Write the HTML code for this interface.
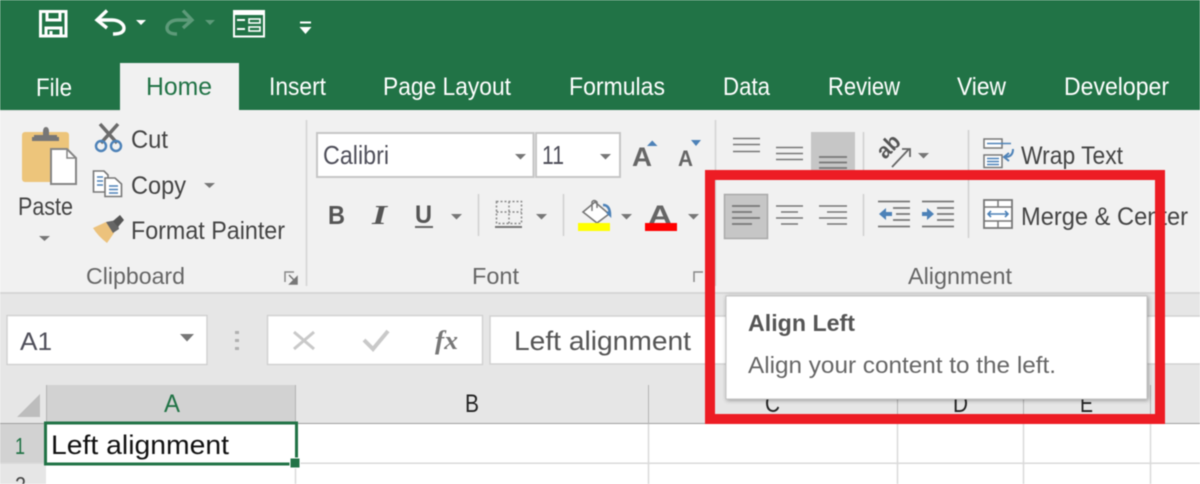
<!DOCTYPE html>
<html><head><meta charset="utf-8"><style>
html,body{margin:0;padding:0;background:#fff}
svg{display:block;filter:blur(.45px)}
text{font-family:"Liberation Sans",sans-serif;fill:#444}
</style></head><body>
<svg xmlns="http://www.w3.org/2000/svg" width="1200" height="484" viewBox="0 0 1200 484" style="width:1200px;height:484px">
<defs>
<filter id="sh" x="-5%" y="-5%" width="110%" height="110%"><feDropShadow dx="1" dy="1" stdDeviation="2" flood-color="#000" flood-opacity=".35"/></filter>
</defs>
<!-- title bar -->
<rect width="1200" height="110" fill="#217346"/>
<rect x="120" y="63" width="119" height="48" fill="#f1f1f1"/>
<!-- save -->
<path d="M40.500 11.500H66V36H40.500Z M47 11.500V20H60V11.500 M46 36V28H61V36 M51 31V36" fill="none" stroke="#fff" stroke-width="3"/>
<!-- undo -->
<path d="M98 20L112 20C120 20 124 25 124 28C124 32 120 34 113 34" fill="none" stroke="#fff" stroke-width="3.400"/>
<path d="M107 10.500L97 20L107 28" fill="none" stroke="#fff" stroke-width="3.400"/>
<path d="M136 20h10l-5 5z" fill="#fff"/>
<!-- redo -->
<path d="M192 20L178 20C170 20 167 25 167 28C167 32 171 34 177 34" fill="none" stroke="#5d9a79" stroke-width="3.400"/>
<path d="M183 10.500L192 20L183 28" fill="none" stroke="#5d9a79" stroke-width="3.400"/>
<path d="M205 20h10l-5 5z" fill="#5d9a79"/>
<!-- form -->
<rect x="234" y="11" width="30" height="25.500" fill="none" stroke="#fff" stroke-width="2"/>
<rect x="233" y="10" width="32" height="5" fill="#fff"/>
<path d="M237 20h8M237 29h8" stroke="#fff" stroke-width="2"/>
<rect x="249" y="19" width="11" height="4" fill="none" stroke="#fff" stroke-width="1.600"/>
<rect x="249" y="27" width="11" height="4" fill="none" stroke="#fff" stroke-width="1.600"/>
<!-- customize -->
<rect x="300" y="21.500" width="11" height="2" fill="#fff"/>
<path d="M299.500 27h12l-6 7z" fill="#fff"/>
<!-- tabs -->
<g font-size="25">
<text x="36" y="96" textLength="36" lengthAdjust="spacingAndGlyphs" style="fill:#fff">File</text>
<text x="146" y="95" textLength="66" lengthAdjust="spacingAndGlyphs" style="fill:#217346">Home</text>
<text x="269" y="95" textLength="57" lengthAdjust="spacingAndGlyphs" style="fill:#fff">Insert</text>
<text x="383" y="95" textLength="128" lengthAdjust="spacingAndGlyphs" style="fill:#fff">Page Layout</text>
<text x="569" y="95" textLength="96" lengthAdjust="spacingAndGlyphs" style="fill:#fff">Formulas</text>
<text x="723" y="95" textLength="47" lengthAdjust="spacingAndGlyphs" style="fill:#fff">Data</text>
<text x="828" y="95" textLength="72" lengthAdjust="spacingAndGlyphs" style="fill:#fff">Review</text>
<text x="957" y="95" textLength="49" lengthAdjust="spacingAndGlyphs" style="fill:#fff">View</text>
<text x="1064" y="95" textLength="105" lengthAdjust="spacingAndGlyphs" style="fill:#fff">Developer</text>
</g>
<!-- ribbon -->
<rect y="110" width="1200" height="183" fill="#f1f1f1"/>
<rect y="110" width="120" height="1" fill="#e0e0e0"/>
<rect y="292" width="1200" height="2" fill="#d6d6d6"/>
<rect y="294" width="1200" height="130" fill="#e6e6e6"/>
<!-- separators -->
<path d="M306.500 120V286M715.500 120V286" stroke="#d4d4d4" stroke-width="1.500"/>
<path d="M478.500 194V236M563.500 194V236M863.500 132V170M863.500 194V236M968.500 130V170M968.500 180V238" stroke="#d0d0d0" stroke-width="1.500"/>
<!-- paste -->
<rect x="22" y="132" width="47" height="50" rx="3" fill="#edc57b"/>
<path d="M32 137H43V132Q43 127 46 127Q49 127 49 132V137H59V141H32Z" fill="#777"/>
<rect x="34" y="135" width="23" height="6" fill="#777"/>
<path d="M51 149H67L76 158V184H51Z" fill="#fff" stroke="#858585" stroke-width="2"/>
<path d="M67 149V158H76" fill="none" stroke="#858585" stroke-width="1.500"/>
<text x="18" y="215" font-size="25" textLength="55" lengthAdjust="spacingAndGlyphs">Paste</text>
<path d="M39 236h11l-5.500 5z" fill="#777"/>
<!-- cut -->
<path d="M100 124L117 143M118 124L101 143" stroke="#6b6b6b" stroke-width="3.500" fill="none"/>
<circle cx="101" cy="146" r="5" fill="none" stroke="#4d82b8" stroke-width="2.400"/>
<circle cx="116" cy="146" r="5" fill="none" stroke="#4d82b8" stroke-width="2.400"/>
<text x="131" y="148" font-size="25" textLength="37" lengthAdjust="spacingAndGlyphs">Cut</text>
<!-- copy -->
<path d="M93.500 171H104L108 175V192H93.500Z" fill="#fff" stroke="#777" stroke-width="1.600"/>
<path d="M105 178H115L121.500 184V196.500H105Z" fill="#fff" stroke="#777" stroke-width="1.600"/>
<path d="M97 177h6M97 181h6M97 185h6M109 186h9M109 189.500h9M109 193h9" stroke="#4d82b8" stroke-width="1.500"/>
<text x="131" y="194" font-size="25" textLength="55" lengthAdjust="spacingAndGlyphs">Copy</text>
<path d="M204 183h11l-5.500 5z" fill="#777"/>
<!-- format painter -->
<path d="M93 228L106 222L114 233L107 243Q98 236 93 228Z" fill="#ecc27c"/>
<path d="M106 222L117 220L119 229L113 233Z" fill="#666"/>
<path d="M113 221L120 215L124 220L118 227Z" fill="#555"/>
<text x="131" y="239" font-size="25" textLength="154" lengthAdjust="spacingAndGlyphs">Format Painter</text>
<text x="86" y="284" font-size="23" textLength="99" lengthAdjust="spacingAndGlyphs" style="fill:#666">Clipboard</text>
<path d="M294 272h-9v10" fill="none" stroke="#888" stroke-width="1.500"/>
<path d="M289 275L296 282M297 277v7h-7z" stroke="#777" stroke-width="1.500" fill="#777"/>
<!-- font combos -->
<rect x="317" y="133" width="216.500" height="44" fill="#fff" stroke="#c6c6c6" stroke-width="2"/>
<rect x="536" y="133" width="84" height="44" fill="#fff" stroke="#c6c6c6" stroke-width="2"/>
<text x="323" y="164" font-size="26" textLength="66" lengthAdjust="spacingAndGlyphs" style="fill:#4f4f5a">Calibri</text>
<text x="542" y="164" font-size="26" textLength="22" lengthAdjust="spacingAndGlyphs" style="fill:#4f4f5a">11</text>
<path d="M515 154h11l-5.500 5.500zM600 154h11l-5.500 5.500z" fill="#777"/>
<text x="632" y="166" font-size="27" font-weight="bold" textLength="20" lengthAdjust="spacingAndGlyphs" style="fill:#666">A</text>
<path d="M647 146h10.500l-5.250-5.500z" fill="#4d82b8"/>
<text x="678" y="166" font-size="22" font-weight="bold" textLength="15" lengthAdjust="spacingAndGlyphs" style="fill:#666">A</text>
<path d="M691 140h10l-5 6z" fill="#4d82b8"/>
<!-- B I U -->
<text x="328" y="224" font-size="26" font-weight="bold" textLength="17" lengthAdjust="spacingAndGlyphs" style="fill:#555">B</text>
<text x="372" y="224" font-size="27" font-weight="bold" font-style="italic" textLength="15" lengthAdjust="spacingAndGlyphs" style="font-family:'Liberation Serif',serif;fill:#555">I</text>
<text x="415" y="223" font-size="25" font-weight="bold" textLength="17" lengthAdjust="spacingAndGlyphs" style="fill:#555">U</text>
<rect x="415" y="226" width="18" height="2" fill="#666"/>
<path d="M451 214h11l-5.500 5.500zM536 214h11l-5.500 5.500zM621 214h11l-5.500 5.500zM688 214h11l-5.500 5.500z" fill="#777"/>
<!-- borders -->
<path d="M496.500 201.500H521.500V223.500H496.500ZM509 201.500V223.500M496.500 212H521.500" fill="none" stroke="#8a8a8a" stroke-width="1.500" stroke-dasharray="2 2"/>
<rect x="495" y="226" width="27" height="2" fill="#777"/>
<!-- fill colour -->
<path d="M583 212L595 202L609 214L597 223Z" fill="#fff" stroke="#777" stroke-width="1.600"/>
<path d="M592 211V202Q594 199 597 202V208" fill="none" stroke="#777" stroke-width="1.500"/>
<path d="M603 205Q610 205 610 215L607 212" fill="none" stroke="#4d82b8" stroke-width="2.500"/>
<rect x="578" y="223" width="32" height="8" fill="#ffff00"/>
<text x="648" y="224" font-size="27" textLength="24" lengthAdjust="spacingAndGlyphs" style="fill:#666;font-weight:bold">A</text>
<rect x="645" y="223" width="32" height="8" fill="#f00"/>
<text x="472" y="284" font-size="23" textLength="47" lengthAdjust="spacingAndGlyphs" style="fill:#666">Font</text>
<path d="M703 272h-9v10" fill="none" stroke="#888" stroke-width="1.500"/>
<!-- vertical alignment -->
<path d="M733 138.500h27M733 144.500h27M733 151.500h27M776 147.500h27M776 153.500h27M776 159.500h27" stroke="#777" stroke-width="1.600"/>
<rect x="811" y="132" width="44" height="38" fill="#c6c6c6"/>
<path d="M819 157h28M819 162.500h28M819 168h28" stroke="#777" stroke-width="1.800"/>
<!-- orientation -->
<text x="0" y="0" font-size="22" transform="translate(885 160) rotate(-45)" textLength="24" lengthAdjust="spacingAndGlyphs" style="fill:#555;font-weight:bold">ab</text>
<path d="M892 167L909 149M902 149H910V157" fill="none" stroke="#666" stroke-width="1.800"/>
<path d="M918 153h11l-5.500 5.500z" fill="#777"/>
<!-- wrap text -->
<path d="M984 139H1002V148H984ZM984 155H1002V167.500H984Z" fill="#fff" stroke="#777" stroke-width="1.500"/>
<path d="M987 143.500H1011M987 158.500H999M987 161.500H999M987 164.500H999" stroke="#4d82b8" stroke-width="1.500"/>
<path d="M1013 149Q1013 157 1005 157M1009 153L1004 157L1009 161" fill="none" stroke="#4d82b8" stroke-width="2"/>
<text x="1021" y="164" font-size="25" textLength="102" lengthAdjust="spacingAndGlyphs">Wrap Text</text>
<!-- horizontal alignment -->
<rect x="724.500" y="194.500" width="43" height="44" fill="#c6c6c6" stroke="#a9a9a9" stroke-width="1.500"/>
<path d="M732 206h28M732 212h20M732 218h28M732 224h20" stroke="#777" stroke-width="1.800"/>
<path d="M776 206h27M781 212h17M776 218h27M781 224h17M819 206h28M827 212h20M819 218h28M827 224h20" stroke="#777" stroke-width="1.600"/>
<!-- indent -->
<path d="M878 201.500h32M893 208h17M896 214h14M893 220h17M878 226.500h32M922 201.500h32M937 208h17M937 214h17M937 220h17M922 226.500h32" stroke="#777" stroke-width="1.700"/>
<path d="M879 214l7-6v4h6v4h-6v4z" fill="#4d82b8"/>
<path d="M934 214l-7-6v4h-5v4h5v4z" fill="#4d82b8"/>
<!-- merge -->
<rect x="984" y="200" width="28" height="28" fill="#fff" stroke="#777" stroke-width="1.800"/>
<path d="M984 207h28M984 221h28M998 200v7M998 221v7" stroke="#777" stroke-width="1.500"/>
<path d="M988 214h20M991 211l-3 3 3 3M1005 211l3 3-3 3" fill="none" stroke="#4d82b8" stroke-width="1.600"/>
<text x="1021" y="225" font-size="25" textLength="167" lengthAdjust="spacingAndGlyphs">Merge &amp; Center</text>
<text x="908" y="284" font-size="23" textLength="104" lengthAdjust="spacingAndGlyphs" style="fill:#666">Alignment</text>
<!-- formula bar -->
<rect x="7" y="315.500" width="200" height="49" fill="#fff" stroke="#d2d2d2" stroke-width="1.500"/>
<text x="20" y="350" font-size="25" textLength="32" lengthAdjust="spacingAndGlyphs" style="fill:#4f4f5a">A1</text>
<path d="M180 334h14l-7 7.500z" fill="#777"/>
<path d="M237 331v3M237 339v3M237 347v3" stroke="#b0b0b0" stroke-width="4"/>
<rect x="267.500" y="315.500" width="215" height="49" fill="#fff" stroke="#d2d2d2" stroke-width="1.500"/>
<path d="M294 332L314 349M314 332L294 349" stroke="#c9c9c9" stroke-width="3"/>
<path d="M364 340L373 349L388 331" fill="none" stroke="#c9c9c9" stroke-width="4"/>
<text x="435" y="349" font-size="26" font-style="italic" font-weight="bold" textLength="23" lengthAdjust="spacingAndGlyphs" style="font-family:'Liberation Serif',serif;fill:#777">fx</text>
<rect x="490" y="316" width="720" height="48" fill="#fff" stroke="#d2d2d2" stroke-width="1.500"/>
<text x="514" y="350" font-size="27" textLength="177" lengthAdjust="spacingAndGlyphs" style="fill:#555">Left alignment</text>
<!-- sheet -->
<path d="M17 417H40V394Z" fill="#bdbdbd"/>
<rect x="46" y="385" width="249" height="38" fill="#d2d2d2"/>
<rect y="423" width="1200" height="1.500" fill="#9f9f9f"/>
<rect y="424" width="46" height="39" fill="#d2d2d2"/>
<rect y="463" width="46" height="21" fill="#e6e6e6"/>
<rect x="46" y="424" width="1154" height="60" fill="#fff"/>
<rect y="462.500" width="1200" height="1.500" fill="#dadada"/>
<path d="M46.500 385V424M295.500 385V424M648.500 385V424M897.500 385V424M1023.500 385V424M1150.500 385V424" stroke="#b2b2b2" stroke-width="1"/>
<path d="M295.500 424V484M648.500 424V484M897.500 424V484M1023.500 424V484M1150.500 424V484" stroke="#dadada" stroke-width="1.500"/>
<text x="164" y="412" font-size="25" textLength="16" lengthAdjust="spacingAndGlyphs" style="fill:#217346">A</text>
<text x="465" y="412" font-size="25" textLength="14" lengthAdjust="spacingAndGlyphs" style="fill:#222">B</text>
<text x="765" y="412" font-size="25" textLength="15" lengthAdjust="spacingAndGlyphs" style="fill:#222">C</text>
<text x="953" y="412" font-size="25" textLength="15" lengthAdjust="spacingAndGlyphs" style="fill:#222">D</text>
<text x="1080" y="412" font-size="25" textLength="13" lengthAdjust="spacingAndGlyphs" style="fill:#222">E</text>
<text x="15" y="454" font-size="23" textLength="10" lengthAdjust="spacingAndGlyphs" style="fill:#217346">1</text>
<text x="15" y="493" font-size="23" textLength="11" lengthAdjust="spacingAndGlyphs" style="fill:#444">2</text>
<rect x="45.500" y="423" width="251" height="41" fill="#fff" stroke="#217346" stroke-width="3"/>
<rect x="290" y="458" width="10" height="10" fill="#217346" stroke="#fff" stroke-width="1"/>
<text x="51" y="454" font-size="27" textLength="178" lengthAdjust="spacingAndGlyphs" style="fill:#111">Left alignment</text>
<!-- red box -->
<rect x="710" y="175" width="450" height="244" fill="none" stroke="#ed1c24" stroke-width="10"/>
<!-- tooltip -->
<rect x="726" y="296" width="421" height="103" fill="#fff" stroke="#c4c4c4" stroke-width="1" filter="url(#sh)"/>
<text x="748" y="331" font-size="23" font-weight="bold" textLength="107" lengthAdjust="spacingAndGlyphs" style="fill:#555">Align Left</text>
<text x="748" y="373" font-size="23" textLength="308" lengthAdjust="spacingAndGlyphs" style="fill:#666">Align your content to the left.</text>
</svg>
</body></html>
